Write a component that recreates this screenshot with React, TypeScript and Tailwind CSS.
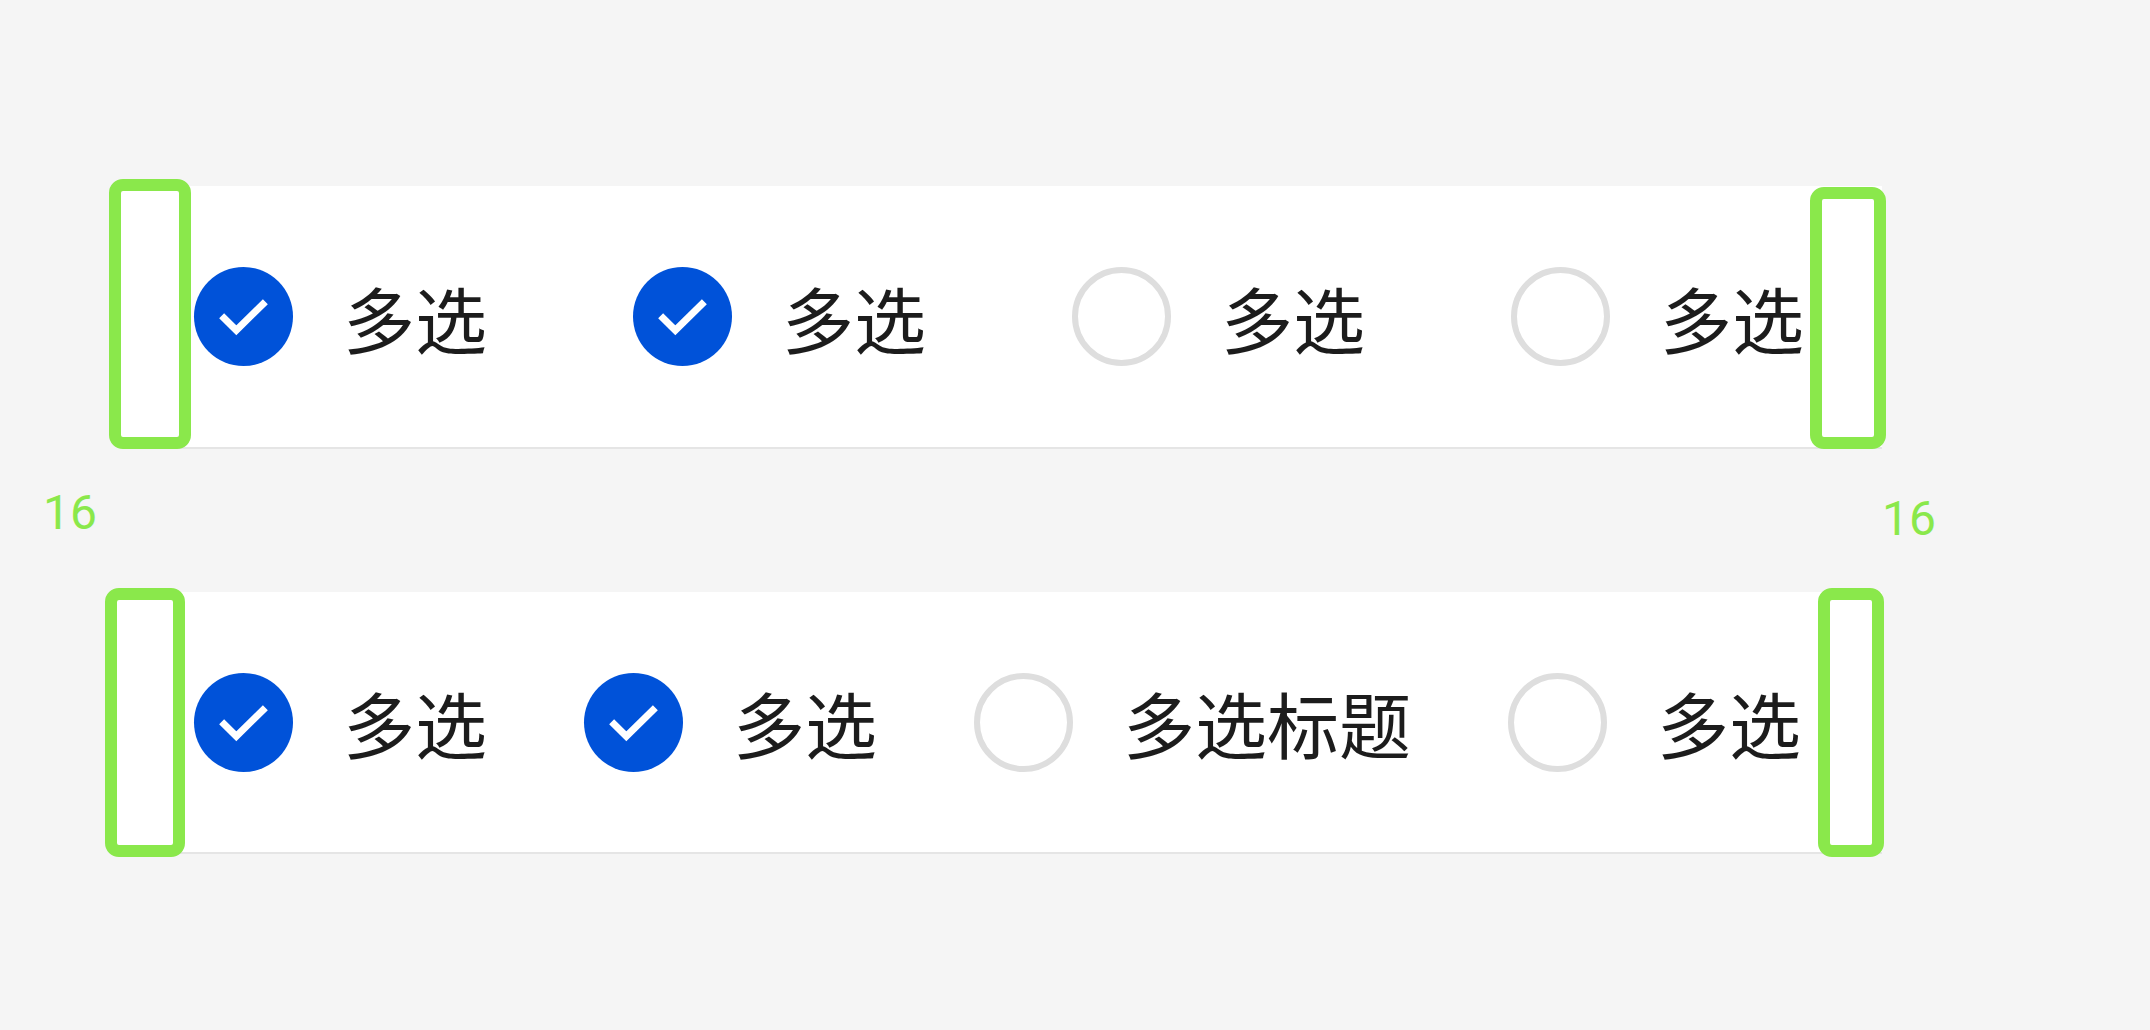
type Item = { label: string; checked: boolean };

function Check() {
  return (
    <svg viewBox="0 0 24 24" className="w-full h-full" fill="none">
      <path d="M6.7 11.8 L10.26 15.35 L17.3 8.4" stroke="#ffffff" strokeWidth="1.7" strokeLinecap="butt" strokeLinejoin="miter" />
    </svg>
  );
}

function Option({ label, checked }: Item) {
  return (
    <div className="flex items-center gap-[50px] shrink-0">
      {checked ? (
        <div className="w-[99px] h-[99px] rounded-full bg-[#0052d9] shrink-0">
          <Check />
        </div>
      ) : (
        <div className="w-[99px] h-[99px] rounded-full border-[6px] border-[#dedede] bg-white shrink-0" />
      )}
      <span className="text-[72px] leading-none text-[#1c1c1c] whitespace-nowrap font-['Noto_Sans_CJK_SC',sans-serif]">
        {label}
      </span>
    </div>
  );
}

export default function App() {
  return (
    <div className="w-[2150px] h-[1030px] bg-[#f5f5f5] overflow-hidden font-['Noto_Sans_CJK_SC',sans-serif]">
      {/* row 1: equal columns */}
      <div className="relative ml-[150px] pt-[186px] w-fit">
        <div className="w-[1732px] h-[263px] bg-white border-b-2 border-[#e5e5e5] pl-[44px] flex items-center">
          <div className="w-[439px] shrink-0">
            <Option label="多选" checked />
          </div>
          <div className="w-[439px] shrink-0">
            <Option label="多选" checked />
          </div>
          <div className="w-[439px] shrink-0">
            <Option label="多选" checked={false} />
          </div>
          <Option label="多选" checked={false} />
        </div>
        <div className="absolute left-[-41px] top-[179px] w-[82px] h-[270px] border-[12px] border-[#8ae84b] rounded-[14px] bg-white" />
        <div className="absolute left-[1660px] top-[187px] w-[76px] h-[262px] border-[12px] border-[#8ae84b] rounded-[14px] bg-white" />
      </div>

      {/* spacing labels */}
      <div className="h-[143px] flex items-start font-['Roboto',sans-serif] font-normal text-[48px] leading-none text-[#8ae84b]">
        <span className="ml-[43px] mt-[40px]">16</span>
        <span className="ml-[1785px] mt-[46px]">16</span>
      </div>

      {/* row 2: fixed gap */}
      <div className="relative ml-[150px] w-fit">
        <div className="w-[1732px] h-[262px] bg-white border-b-2 border-[#e5e5e5] pl-[44px] flex items-center gap-[97px]">
          <Option label="多选" checked />
          <Option label="多选" checked />
          <Option label="多选标题" checked={false} />
          <Option label="多选" checked={false} />
        </div>
        <div className="absolute left-[-45px] top-[-4px] w-[80px] h-[269px] border-[12px] border-[#8ae84b] rounded-[14px] bg-white" />
        <div className="absolute left-[1668px] top-[-4px] w-[66px] h-[269px] border-[12px] border-[#8ae84b] rounded-[14px] bg-white" />
      </div>
    </div>
  );
}
